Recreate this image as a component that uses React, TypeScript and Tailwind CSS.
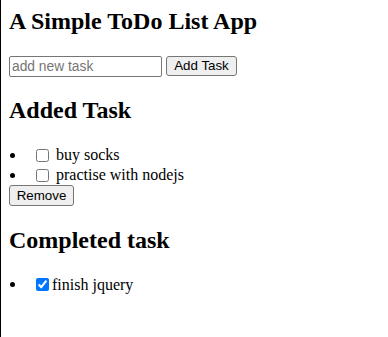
import { useState } from 'react';

type Task = { id: number; text: string; done: boolean };

const btn =
  'h-[20px] bg-[#efefef] border border-[#767676] rounded-[3px] text-[13.33px] leading-[18px] text-black font-["Liberation_Sans",Arial,sans-serif] flex items-center justify-center';

export default function App() {
  const [tasks, setTasks] = useState<Task[]>([
    { id: 1, text: 'buy socks', done: false },
    { id: 2, text: 'practise with nodejs', done: false },
    { id: 3, text: 'finish jquery', done: true },
  ]);
  const [draft, setDraft] = useState('');

  const addTask = () => {
    if (!draft.trim()) return;
    setTasks(t => [...t, { id: Date.now(), text: draft.trim(), done: false }]);
    setDraft('');
  };

  const toggle = (id: number) =>
    setTasks(t => t.map(x => (x.id === id ? { ...x, done: !x.done } : x)));

  const open = tasks.filter(t => !t.done);
  const done = tasks.filter(t => t.done);

  return (
    <div className='min-h-screen border-l border-black bg-white pl-2 pt-2 text-black font-["Liberation_Serif","Times_New_Roman",serif]'>
      <h2 className="text-[24px] leading-[27.6px] font-bold mb-[20px]">A Simple ToDo List App</h2>

      <div className="flex items-center h-[21px]">
        <input
          value={draft}
          onChange={e => setDraft(e.target.value)}
          placeholder="add new task"
          className='w-[153px] h-[21px] border border-[#767676] rounded-[2px] px-[2px] text-[13.8px] font-["Liberation_Sans",Arial,sans-serif] placeholder:text-[#757575] outline-none'
        />
        <button onClick={addTask} className={`${btn} ml-[4px] w-[71px]`}>
          Add Task
        </button>
      </div>

      {/* Added tasks */}
      <h2 className="text-[24px] leading-[27.6px] font-bold mt-[20px] mb-[21px]">Added Task</h2>
      <ul>
        {open.map(t => (
          <li key={t.id} className="flex items-center h-[20px] text-[16px]">
            <span className="w-[5px] h-[5px] rounded-full bg-black ml-[1px]" />
            <input
              type="checkbox"
              checked={t.done}
              onChange={() => toggle(t.id)}
              className="m-0 ml-[21px] w-[13px] h-[13px]"
            />
            <span className="ml-[7px] leading-[20px]">{t.text}</span>
          </li>
        ))}
      </ul>
      <button
        onClick={() => setTasks(t => t.filter(x => x.done))}
        className={`${btn} w-[65px] h-[21px]`}
      >
        Remove
      </button>

      {/* Completed tasks */}
      <h2 className="text-[24px] leading-[27.6px] font-bold mt-[21px] mb-[20px]">Completed task</h2>
      <ul>
        {done.map(t => (
          <li key={t.id} className="flex items-center h-[20px] text-[16px]">
            <span className="w-[5px] h-[5px] rounded-full bg-black ml-[1px]" />
            <input
              type="checkbox"
              checked={t.done}
              onChange={() => toggle(t.id)}
              className="m-0 ml-[21px] w-[13px] h-[13px]"
            />
            <span className="ml-[3px] leading-[20px]">{t.text}</span>
          </li>
        ))}
      </ul>
    </div>
  );
}
